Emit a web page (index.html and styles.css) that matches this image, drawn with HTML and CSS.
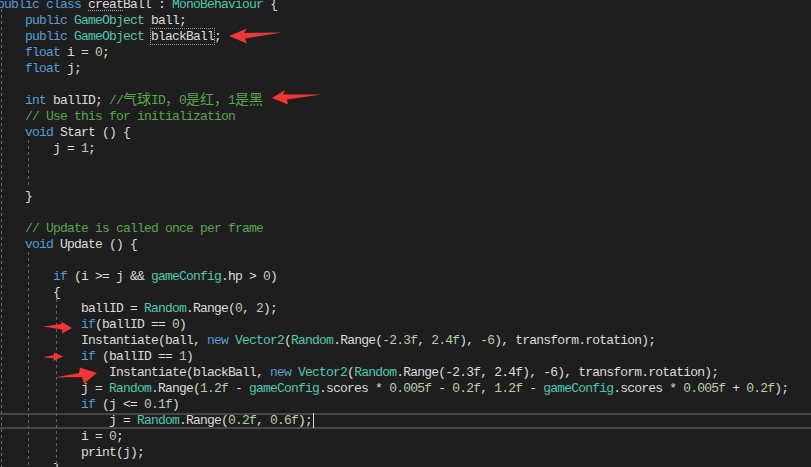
FILE: index.html
```html
<!DOCTYPE html>
<html lang="zh-CN">
<head>
<meta charset="utf-8">
<title>creatBall.cs</title>
<link rel="stylesheet" href="styles.css">
</head>
<body>
<div class="editor">
  <div class="code">
    <div class="ln"><span class="kw">public</span> <span class="kw">class</span> <span class="squig">creat</span>Ball : <span class="ty">MonoBehaviour</span> {</div>
    <div class="ln">    <span class="kw">public</span> <span class="ty">GameObject</span> ball;</div>
    <div class="ln">    <span class="kw">public</span> <span class="ty">GameObject</span> <span class="sel">blackBall</span>;</div>
    <div class="ln">    <span class="kw">float</span> i = <span class="nu">0</span>;</div>
    <div class="ln">    <span class="kw">float</span> j;</div>
    <div class="ln"></div>
    <div class="ln">    <span class="kw">int</span> ballID; <span class="cm">//<span class="cjk">气球</span>ID<span class="cjk">，</span>0<span class="cjk">是红，</span>1<span class="cjk">是黑</span></span></div>
    <div class="ln">    <span class="cm">// Use this for initialization</span></div>
    <div class="ln">    <span class="kw">void</span> Start () {</div>
    <div class="ln">        j = <span class="nu">1</span>;</div>
    <div class="ln"></div>
    <div class="ln"></div>
    <div class="ln">    }</div>
    <div class="ln"></div>
    <div class="ln">    <span class="cm">// Update is called once per frame</span></div>
    <div class="ln">    <span class="kw">void</span> Update () {</div>
    <div class="ln"></div>
    <div class="ln">        <span class="kw">if</span> (i &gt;= j &amp;&amp; <span class="ty">gameConfig</span>.hp &gt; <span class="nu">0</span>)</div>
    <div class="ln">        {</div>
    <div class="ln">            ballID = <span class="ty">Random</span>.Range(<span class="nu">0</span>, <span class="nu">2</span>);</div>
    <div class="ln">            <span class="kw">if</span>(ballID == <span class="nu">0</span>)</div>
    <div class="ln">            Instantiate(ball, <span class="kw">new</span> <span class="ty">Vector2</span>(<span class="ty">Random</span>.Range(<span class="nu">-2.3f</span>, <span class="nu">2.4f</span>), <span class="nu">-6</span>), transform.rotation);</div>
    <div class="ln">            <span class="kw">if</span> (ballID == <span class="nu">1</span>)</div>
    <div class="ln">                Instantiate(blackBall, <span class="kw">new</span> <span class="ty">Vector2</span>(<span class="ty">Random</span>.Range(-2.3f, 2.4f), -6), transform.rotation);</div>
    <div class="ln">            j = <span class="ty">Random</span>.Range(<span class="nu">1.2f</span> - <span class="ty">gameConfig</span>.scores * <span class="nu">0.005f</span> - <span class="nu">0.2f</span>, <span class="nu">1.2f</span> - <span class="ty">gameConfig</span>.scores * <span class="nu">0.005f</span> + <span class="nu">0.2f</span>);</div>
    <div class="ln">            <span class="kw">if</span> (j &lt;= <span class="nu">0.1f</span>)</div>
    <div class="ln current">                j = <span class="ty">Random</span>.Range(<span class="nu">0.2f</span>, <span class="nu">0.6f</span>);<span class="caret"></span></div>
    <div class="ln">            i = <span class="nu">0</span>;</div>
    <div class="ln">            print(j);</div>
    <div class="ln">        }</div>
  </div>

  <div class="guide guide-edge"></div>
  <div class="guide guide-start"></div>
  <div class="guide guide-update"></div>
  <div class="guide guide-if"></div>

  <svg class="arrows" width="811" height="467" viewBox="0 0 811 467" xmlns="http://www.w3.org/2000/svg">
    <polygon points="229,36 247,28.5 244,33 282,32.5 245,38.5 247,43.5"/>
    <polygon points="272,98 285,90 283,94.5 322,94.5 287,99.5 288,104.5"/>
    <polygon points="43,326.5 62,324 61,321.5 72,328 62,333.5 62,329.5"/>
    <polygon points="43,357 54,355 54,352.5 63,356.5 53,361 54,358.5"/>
    <polygon points="55,377.5 79,373 80,367.5 97,373 84,383.5 82,377"/>
  </svg>
</div>
</body>
</html>
```

FILE: styles.css
```css
html, body {
  margin: 0;
  padding: 0;
  background: #1e1e1e;
}

.editor {
  position: relative;
  width: 811px;
  height: 467px;
  overflow: hidden;
  background: #1e1e1e;
}

.code {
  margin-top: -3px;
  margin-left: -3px;
  font-family: "Liberation Mono", "DejaVu Sans Mono", monospace;
  font-size: 13px;
  letter-spacing: -0.8px;
  color: #dcdcdc;
}

.ln {
  height: 16px;
  line-height: 16px;
  white-space: pre;
}

.kw { color: #569cd6; }
.ty { color: #4ec9b0; }
.nu { color: #b5cea8; }
.cm { color: #57a64a; }

.cjk {
  font-family: "Noto Sans CJK SC", sans-serif;
  font-size: 14px;
  letter-spacing: 0;
  line-height: 0;
}

.squig {
  text-decoration: underline dotted #9a9a9a;
  text-underline-offset: 2px;
}

.sel {
  outline: 1px dotted #9a9a9a;
  outline-offset: 0;
}

.current {
  position: relative;
  margin-left: -20px;
  padding-left: 20px;
  box-shadow: inset 0 2px 0 #464646, inset 0 -2px 0 #464646;
}

.caret {
  display: inline-block;
  width: 1px;
  height: 15px;
  margin-left: 1px;
  vertical-align: middle;
  background: #dcdcdc;
}

.guide {
  position: absolute;
  width: 1px;
  background: repeating-linear-gradient(to bottom, #646464 0 3px, transparent 3px 6px);
}

.guide-edge { left: 1px; top: 9px; bottom: 0; }
.guide-start { left: 28px; top: 140px; height: 48px; }
.guide-update { left: 28px; top: 252px; bottom: 0; }
.guide-if { left: 56px; top: 299px; bottom: 0; }

.arrows {
  position: absolute;
  left: 0;
  top: 0;
  pointer-events: none;
}

.arrows polygon { fill: #f23535; }
```
